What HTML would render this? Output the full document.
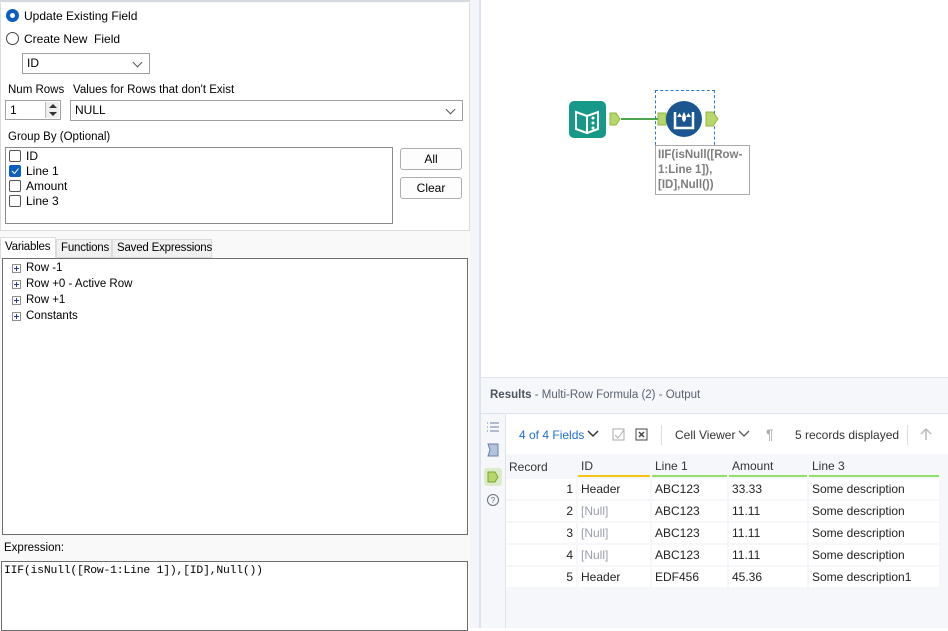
<!DOCTYPE html>
<html><head><meta charset="utf-8"><style>
*{box-sizing:border-box;margin:0;padding:0}
body{width:948px;height:628px;overflow:hidden;background:#fff;font-family:"Liberation Sans",Arial,sans-serif;font-size:12px;color:#000;position:relative}
.a{position:absolute;white-space:nowrap}
.box{position:absolute;border:1px solid #7a7a7a;background:#fff}
.sel{position:absolute;border:1px solid #a0a0a0;background:#fff;padding:2px 4px;font-size:12px}
.chev{position:absolute;right:8px;top:5px;width:7px;height:7px;border-right:1px solid #555;border-bottom:1px solid #555;transform:rotate(45deg)}
.cb{display:inline-block;width:12px;height:12px;border:1px solid #555;border-radius:2px;vertical-align:-2px;margin-right:5px;background:#fff}
.btn{position:absolute;border:1px solid #adadad;background:#fdfdfd;border-radius:3px;text-align:center;line-height:20px}
.tree div{height:16px;line-height:16px;position:relative;padding-left:23px;font-size:11.5px}
.pl{position:absolute;left:9px;top:4px;width:9px;height:9px;border:1px solid #919191;background:#fff}
.pl:before{content:"";position:absolute;left:1px;top:3px;width:5px;height:1px;background:#243a85}
.pl:after{content:"";position:absolute;left:3px;top:1px;width:1px;height:5px;background:#243a85}
table{border-collapse:separate;border-spacing:2px;font-size:12px;color:#222}
td{height:20px;padding:0 3px;background:#fff;white-space:nowrap}
.h td{background:#f5f7fb;color:#333}
.rec{text-align:right}
.nl{color:#9a9fab}
.tab{font-size:11.5px;letter-spacing:-0.2px}
</style></head><body>
<div class="a" style="left:0;top:0;width:470px;height:628px;background:#f9f9f9"></div>
<div class="a" style="left:0;top:0;width:470px;height:2px;background:#d6d9df"></div>
<div class="a" style="left:0;top:3px;width:470px;height:228px;border:1px solid #dcdcdc;border-top:none;background:#fff"></div>
<div class="a" style="left:470px;top:0;width:10px;height:628px;background:#f3f5fa"></div>
<div class="a" style="left:479px;top:0;width:2px;height:628px;background:#dde3ee"></div>

<div class="a" style="left:6px;top:9px;width:13px;height:13px;border-radius:50%;background:#0a5fbf"><div class="a" style="left:4px;top:4px;width:5px;height:5px;border-radius:50%;background:#fff"></div></div>
<div class="a" style="left:24px;top:9px">Update Existing Field</div>
<div class="a" style="left:6px;top:32px;width:13px;height:13px;border-radius:50%;border:1px solid #444;background:#fff"></div>
<div class="a" style="left:24px;top:32px">Create New &nbsp;Field</div>
<div class="sel" style="left:22px;top:53px;width:128px;height:21px">ID<div class="chev"></div></div>
<div class="a" style="left:8px;top:84px;font-size:11.5px">Num Rows</div>
<div class="a" style="left:73px;top:84px;font-size:11.5px">Values for Rows that don't Exist</div>
<div class="sel" style="left:5px;top:100px;width:56px;height:20px">1
<div class="a" style="right:1px;top:1px;width:14px;height:16px;border-left:1px solid #bbb;background:#eee"><div class="a" style="left:3px;top:2px;border:4px solid transparent;border-bottom:4px solid #333;border-top:none"></div><div class="a" style="left:3px;top:10px;border:4px solid transparent;border-top:4px solid #333;border-bottom:none"></div></div></div>
<div class="sel" style="left:70px;top:100px;width:393px;height:21px">NULL<div class="chev"></div></div>
<div class="a" style="left:8px;top:131px;font-size:11.5px">Group By (Optional)</div>
<div class="box" style="left:5px;top:147px;width:388px;height:77px;border-color:#8a8a8a;padding:1px 0 0 3px;line-height:15px">
<div><span class="cb"></span>ID</div>
<div><span class="cb" style="background:#0a5fbf;border-color:#0a5fbf;position:relative"><svg width="10" height="10" style="position:absolute;left:0;top:0"><path d="M2 5 L4.5 7.5 L8.5 2.5" stroke="#fff" fill="none" stroke-width="1"/></svg></span>Line 1</div>
<div><span class="cb"></span>Amount</div>
<div><span class="cb"></span>Line 3</div>
</div>
<div class="btn" style="left:400px;top:148px;width:62px;height:22px">All</div>
<div class="btn" style="left:400px;top:177px;width:62px;height:22px">Clear</div>

<div class="a tab" style="left:0;top:237px;width:56px;height:22px;background:#fff;border:1px solid #dcdcdc;border-bottom:none;padding:3px 0 0 4px">Variables</div>
<div class="a tab" style="left:56px;top:239px;width:56px;height:19px;background:#f0f0f0;border:1px solid #dcdcdc;padding:2px 0 0 4px">Functions</div>
<div class="a tab" style="left:112px;top:239px;width:100px;height:19px;background:#f0f0f0;border:1px solid #dcdcdc;padding:2px 0 0 4px">Saved Expressions</div>
<div class="box tree" style="left:2px;top:258px;width:466px;height:277px;border-color:#6e6e6e;padding-top:1px">
<div><span class="pl"></span>Row -1</div>
<div><span class="pl"></span>Row +0 - Active Row</div>
<div><span class="pl"></span>Row +1</div>
<div><span class="pl"></span>Constants</div>
</div>
<div class="a" style="left:4px;top:542px;font-size:11.5px">Expression:</div>
<div class="box" style="left:1px;top:561px;width:467px;height:70px;border-color:#6e6e6e;padding:3px 2px;font-family:'Liberation Mono',monospace;font-size:11.4px;letter-spacing:-0.2px">IIF(isNull([Row-1:Line 1]),[ID],Null())</div>

<div class="a" style="left:481px;top:0;width:467px;height:377px;background:#fff"></div>
<svg class="a" style="left:568px;top:100px" width="40" height="40"><rect x="1" y="1" width="37" height="37" rx="5" fill="#17998a"/>
<path d="M8 12 L19 16 L30 12 L30 29 L19 33 L8 29Z" fill="none" stroke="#fff" stroke-width="2"/><path d="M19 16 V33" stroke="#fff" stroke-width="2"/><circle cx="25" cy="18" r="1.5" fill="#fff"/><circle cx="25" cy="23" r="1.5" fill="#fff"/><circle cx="25" cy="28" r="1.5" fill="#fff"/></svg>
<svg class="a" style="left:609px;top:112px" width="12" height="14"><path d="M1 1 H7 L11 7 L7 13 H1Z" fill="#b7d66b" stroke="#8fb83f"/></svg>
<div class="a" style="left:621px;top:118px;width:37px;height:2px;background:#4da64d"></div>
<div class="a" style="left:655px;top:90px;width:60px;height:60px;border:1px dashed #2a7ad5"></div>
<svg class="a" style="left:657px;top:112px" width="10" height="14"><rect x="1" y="1" width="8" height="12" fill="#b7d66b" stroke="#8fb83f"/></svg>
<svg class="a" style="left:665px;top:100px" width="38" height="38"><circle cx="19" cy="19" r="18" fill="#1b5691"/>
<path d="M10 12 V28 H28 V12" fill="none" stroke="#fff" stroke-width="2.5"/><path d="M19 12 Q15 19 19 22 Q23 19 19 12Z" fill="#fff"/><path d="M12 17 l2.5 -4 l2.5 4z M21 17 l2.5 -4 l2.5 4z" fill="#fff"/></svg>
<svg class="a" style="left:705px;top:111px" width="14" height="16"><path d="M1 1 H8 L13 8 L8 15 H1Z" fill="#b7d66b" stroke="#8fb83f"/></svg>
<div class="a" style="left:655px;top:145px;width:95px;height:50px;border:1px solid #a8a8a8;background:#fff;color:#7d7d7d;font-weight:bold;font-size:11.5px;line-height:15px;padding:2px 2px">IIF(isNull([Row-<br>1:Line 1]),<br>[ID],Null())</div>

<div class="a" style="left:481px;top:377px;width:467px;height:251px;background:#f5f7fb;border-top:1px solid #dde3ee"></div>
<div class="a" style="left:490px;top:389px;color:#5a6270;font-size:11.5px"><b style="color:#4d5562">Results</b> - Multi-Row Formula (2) - Output</div>
<div class="a" style="left:481px;top:413px;width:467px;height:1px;background:#dde3ee"></div>
<div class="a" style="left:505px;top:414px;width:1px;height:214px;background:#dde3ee"></div>
<svg class="a" style="left:486px;top:420px" width="14" height="90">
<g stroke="#6b7fa5" stroke-width="1"><path d="M1 3h1M4 3h9M1 7h1M4 7h9M1 11h1M4 11h9"/></g>
<path d="M2 24 H12 V36 H2 L4 30Z" fill="#b3c2dd" stroke="#6b7fa5"/>
</svg>
<div class="a" style="left:484px;top:468px;width:18px;height:18px;background:#dbeccb;border-radius:3px"><svg width="18" height="18"><path d="M4 4 H11 L14 9 L11 14 H4Z" fill="#b7d66b" stroke="#7da233"/></svg></div>
<svg class="a" style="left:486px;top:493px" width="14" height="14"><circle cx="7" cy="7" r="5.5" fill="none" stroke="#6a6f7a"/><text x="7" y="10" font-size="8" text-anchor="middle" fill="#6a6f7a" font-family="Liberation Sans">?</text></svg>
<div class="a" style="left:506px;top:414px;width:442px;height:40px;background:#fff"></div>
<div class="a" style="left:519px;top:428px;color:#1f6fd1;font-size:12px">4 of 4 Fields</div>
<svg class="a" style="left:587px;top:430px" width="12" height="8"><path d="M1 1 L6 6 L11 1" stroke="#333" fill="none" stroke-width="1.5"/></svg>
<svg class="a" style="left:612px;top:427px" width="14" height="14"><rect x="1" y="2" width="11" height="11" fill="none" stroke="#aaa"/><path d="M3 8 L6 11 L12 3" stroke="#aaa" fill="none"/></svg>
<svg class="a" style="left:635px;top:428px" width="14" height="14"><rect x="1" y="1" width="11" height="11" fill="none" stroke="#444"/><path d="M4 4 L9 9 M9 4 L4 9" stroke="#444" stroke-width="1.5"/></svg>
<div class="a" style="left:661px;top:425px;width:1px;height:20px;background:#ddd"></div>
<div class="a" style="left:675px;top:428px;color:#333">Cell Viewer</div>
<svg class="a" style="left:738px;top:430px" width="12" height="8"><path d="M1 1 L6 6 L11 1" stroke="#555" fill="none" stroke-width="1.3"/></svg>
<div class="a" style="left:766px;top:426px;color:#aaa;font-size:14px">¶</div>
<div class="a" style="left:795px;top:428px;color:#333">5 records displayed</div>
<div class="a" style="left:907px;top:425px;width:1px;height:20px;background:#ddd"></div>
<svg class="a" style="left:919px;top:427px" width="14" height="14"><path d="M7 13 V2 M2 7 L7 2 L12 7" stroke="#bbb" fill="none" stroke-width="1.5"/></svg>
<table class="a" style="left:504px;top:455px">
<tr class="h"><td style="width:70px">Record</td><td style="width:72px;border-bottom:2px solid #f5c518">ID</td><td style="width:75px;border-bottom:2px solid #8fe06a">Line 1</td><td style="width:78px;border-bottom:2px solid #8fe06a">Amount</td><td style="width:130px;border-bottom:2px solid #8fe06a">Line 3</td></tr>
<tr><td class="rec">1</td><td>Header</td><td>ABC123</td><td>33.33</td><td>Some description</td></tr>
<tr><td class="rec">2</td><td class="nl">[Null]</td><td>ABC123</td><td>11.11</td><td>Some description</td></tr>
<tr><td class="rec">3</td><td class="nl">[Null]</td><td>ABC123</td><td>11.11</td><td>Some description</td></tr>
<tr><td class="rec">4</td><td class="nl">[Null]</td><td>ABC123</td><td>11.11</td><td>Some description</td></tr>
<tr><td class="rec">5</td><td>Header</td><td>EDF456</td><td>45.36</td><td>Some description1</td></tr>
</table>
</body></html>
